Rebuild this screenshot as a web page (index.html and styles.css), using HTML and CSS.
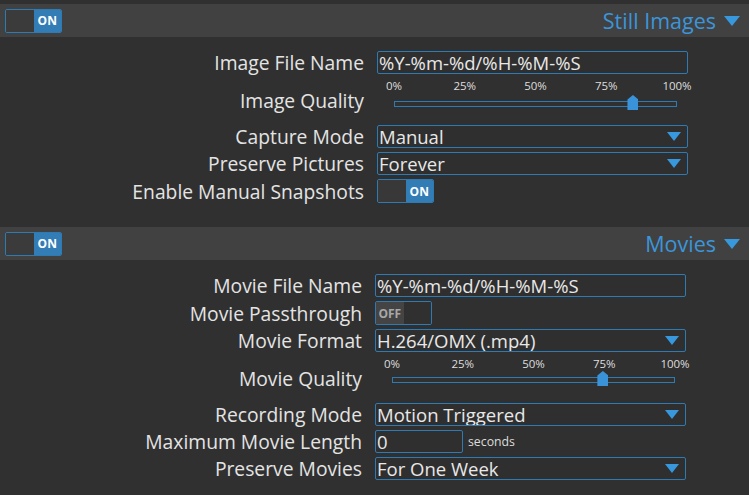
FILE: index.html
```html
<!DOCTYPE html>
<html>
<head>
<meta charset="utf-8">
<link rel="stylesheet" href="styles.css">
</head>
<body>
<div class="page">
  <section class="section s1">
    <div class="sec-head">
      <div class="toggle on"><span class="t-left"></span><span class="t-right">ON</span></div>
      <div class="sec-title">Still Images <span class="tri big"></span></div>
    </div>
    <div class="sec-body">
      <div class="row">
        <div class="label">Image File Name</div>
        <div class="value"><div class="input wide">%Y-%m-%d/%H-%M-%S</div></div>
      </div>
      <div class="row slider-row">
        <div class="label">Image Quality</div>
        <div class="value">
          <div class="slider">
            <div class="ticks">
              <span class="tick" style="left:0%">0%</span>
              <span class="tick" style="left:25%">25%</span>
              <span class="tick" style="left:50%">50%</span>
              <span class="tick" style="left:75%">75%</span>
              <span class="tick" style="left:100%">100%</span>
            </div>
            <div class="track"><span class="thumb" style="left:84.5%"></span></div>
          </div>
        </div>
      </div>
      <div class="row">
        <div class="label">Capture Mode</div>
        <div class="value"><div class="input select">Manual<span class="tri"></span></div></div>
      </div>
      <div class="row">
        <div class="label">Preserve Pictures</div>
        <div class="value"><div class="input select">Forever<span class="tri"></span></div></div>
      </div>
      <div class="row trow">
        <div class="label">Enable Manual Snapshots</div>
        <div class="value"><div class="toggle on"><span class="t-left"></span><span class="t-right">ON</span></div></div>
      </div>
    </div>
  </section>
  <section class="section s2">
    <div class="sec-head">
      <div class="toggle on"><span class="t-left"></span><span class="t-right">ON</span></div>
      <div class="sec-title">Movies <span class="tri big"></span></div>
    </div>
    <div class="sec-body">
      <div class="row">
        <div class="label">Movie File Name</div>
        <div class="value"><div class="input wide">%Y-%m-%d/%H-%M-%S</div></div>
      </div>
      <div class="row trow">
        <div class="label">Movie Passthrough</div>
        <div class="value"><div class="toggle off"><span class="t-left">OFF</span><span class="t-right"></span></div></div>
      </div>
      <div class="row">
        <div class="label">Movie Format</div>
        <div class="value"><div class="input select">H.264/OMX (.mp4)<span class="tri"></span></div></div>
      </div>
      <div class="row slider-row">
        <div class="label">Movie Quality</div>
        <div class="value">
          <div class="slider">
            <div class="ticks">
              <span class="tick" style="left:0%">0%</span>
              <span class="tick" style="left:25%">25%</span>
              <span class="tick" style="left:50%">50%</span>
              <span class="tick" style="left:75%">75%</span>
              <span class="tick" style="left:100%">100%</span>
            </div>
            <div class="track"><span class="thumb" style="left:74.5%"></span></div>
          </div>
        </div>
      </div>
      <div class="row">
        <div class="label">Recording Mode</div>
        <div class="value"><div class="input select">Motion Triggered<span class="tri"></span></div></div>
      </div>
      <div class="row">
        <div class="label">Maximum Movie Length</div>
        <div class="value inline"><div class="input short">0</div><span class="unit">seconds</span></div>
      </div>
      <div class="row">
        <div class="label">Preserve Movies</div>
        <div class="value"><div class="input select">For One Week<span class="tri"></span></div></div>
      </div>
    </div>
  </section>
</div>
</body>
</html>
```

FILE: styles.css
```css
html, body {
  margin: 0;
  padding: 0;
  background: #303030;
}
body {
  font-family: "Open Sans", "Noto Sans", sans-serif;
  color: #e2e2e2;
  width: 749px;
  height: 495px;
  overflow: hidden;
}
.page {
  padding-top: 4px;
}
.section + .section {
  margin-top: 24px;
}
.sec-head {
  height: 33px;
  background: #414141;
  display: flex;
  align-items: center;
  justify-content: space-between;
  padding: 0 9px 0 5px;
}
.sec-title {
  color: #3c95d9;
  font-size: 21.5px;
  line-height: 28px;
  display: flex;
  align-items: center;
  gap: 8px;
}
.tri {
  width: 0;
  height: 0;
  border-left: 7px solid transparent;
  border-right: 7px solid transparent;
  border-top: 9px solid #3798dd;
}
.tri.big {
  border-left-width: 8px;
  border-right-width: 8px;
  border-top-width: 10px;
}
.toggle {
  display: flex;
  width: 57px;
  height: 24px;
  box-sizing: border-box;
  border: 1px solid #2e7ab3;
  border-radius: 2px;
  font-size: 12px;
  font-weight: bold;
  overflow: hidden;
}
.toggle .t-left, .toggle .t-right {
  flex: 1;
  display: flex;
  align-items: center;
  justify-content: center;
}
.toggle.on .t-left {
  background: #383838;
}
.sec-head .toggle.on .t-left {
  background: #3b3b3b;
}
.toggle.on .t-right {
  background: #327db6;
  color: #ffffff;
}
.toggle.off .t-left {
  background: #444444;
  color: #a8a8a8;
}
.toggle.off .t-right {
  background: #303030;
}
.sec-body {
  padding-top: 14px;
}
.row {
  display: grid;
  grid-template-columns: 364px 311px;
  column-gap: 13px;
  align-items: center;
  height: 23px;
  margin-bottom: 4px;
}
.s2 .row {
  grid-template-columns: 362px 311px;
}
.row.trow {
  height: 24px;
}
.row.slider-row {
  height: 43px;
  align-items: start;
}
.slider-row .label {
  margin-top: 11px;
}
.label {
  text-align: right;
  font-size: 19.3px;
  line-height: 23px;
  white-space: nowrap;
  color: #e4e4e4;
}
.input {
  box-sizing: border-box;
  height: 23px;
  border: 1px solid #2e7ab3;
  border-radius: 2px;
  background: #2f2f2f;
  font-size: 18.5px;
  line-height: 21px;
  padding: 0 0 0 1px;
  white-space: nowrap;
  color: #e8e8e8;
  overflow: hidden;
}
.input.select {
  display: flex;
  align-items: center;
  justify-content: space-between;
  padding-right: 6px;
}
.input.short {
  width: 88px;
}
.value.inline {
  display: flex;
  align-items: center;
  gap: 5px;
}
.unit {
  font-size: 12.3px;
  color: #dcdcdc;
}
.slider {
  position: relative;
  margin: 0 11px 0 17px;
  height: 43px;
}
.ticks {
  position: relative;
  height: 16px;
  margin-top: 1px;
}
.tick {
  position: absolute;
  top: 0;
  transform: translateX(-50%);
  font-size: 11.5px;
  color: #dedede;
  line-height: 14px;
}
.track {
  position: relative;
  height: 6px;
  box-sizing: border-box;
  border: 1px solid #2e7ab3;
  margin-top: 6px;
}
.s2 .track {
  margin-top: 4px;
}
.thumb {
  position: absolute;
  top: -7px;
  width: 11px;
  height: 15px;
  margin-left: -5px;
  background: #3a93d8;
  clip-path: polygon(0 30%, 50% 0, 100% 30%, 100% 100%, 0 100%);
}
```
